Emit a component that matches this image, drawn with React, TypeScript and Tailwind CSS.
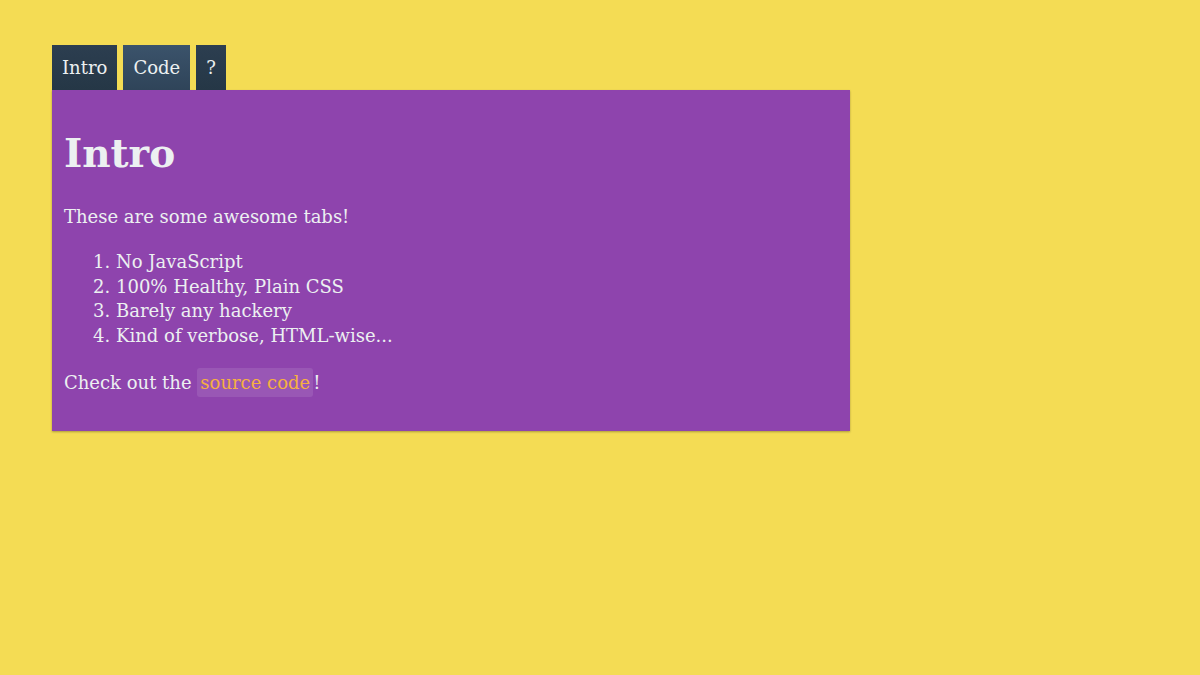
import React from "react";

export default function App() {
  return (
    <div className="w-[1200px] h-[675px] bg-[#f4dc54] pt-[45px] pl-[52px] text-[#ecf0f1]" style={{ fontFamily: '"DejaVu Serif", "Liberation Serif", serif' }}>
      <div className="flex gap-[6px] h-[45px]">
        <div className="h-full px-[10px] flex items-center text-[18px] bg-gradient-to-b from-[#2c3e50] to-[#253746]">Intro</div>
        <div className="h-full px-[10px] flex items-center text-[18px] bg-gradient-to-b from-[#3b536b] to-[#2f4459]">Code</div>
        <div className="h-full px-[10px] flex items-center text-[18px] bg-gradient-to-b from-[#2c3e50] to-[#253746]">?</div>
      </div>
      <div className="w-[798px] h-[341px] bg-[#8e44ad] px-[12px] pt-[38px] shadow-[0_1px_2px_rgba(0,0,0,0.3)]">
        <h1 className="text-[39px] font-bold leading-[50px] m-0">Intro</h1>
        <p className="text-[18px] leading-[24px] mt-[27px]">These are some awesome tabs!</p>
        <ol className="list-decimal pl-[52px] text-[18px] leading-[24.5px] mt-[21px]">
          <li>No JavaScript</li>
          <li>100% Healthy, Plain CSS</li>
          <li>Barely any hackery</li>
          <li>Kind of verbose, HTML-wise...</li>
        </ol>
        <p className="text-[18px] leading-[24px] mt-[23px]">
          Check out the{" "}
          <span className="bg-white/10 rounded-[3px] px-[3px] py-[4px] text-[#f5b041]">source code</span>!
        </p>
      </div>
    </div>
  );
}
